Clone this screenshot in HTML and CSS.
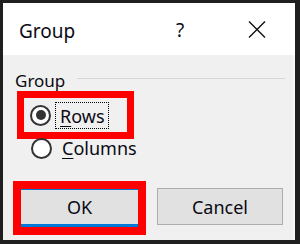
FILE: index.html
```html
<!DOCTYPE html>
<html>
<head>
<meta charset="utf-8">
<link rel="stylesheet" href="styles.css">
</head>
<body>
<div class="window">
  <div class="titlebar">
    <div class="title">Group</div>
    <div class="tb-btn help">?</div>
    <div class="tb-btn close">
      <svg width="18" height="17" viewBox="0 0 18 17"><path d="M1 0.5 L17 16.5 M17 0.5 L1 16.5" stroke="#111" stroke-width="1.4" fill="none"/></svg>
    </div>
  </div>
  <div class="content">
    <div class="group-head">
      <span class="group-label">Group</span>
      <span class="group-line"></span>
    </div>
    <div class="highlight rows-box">
      <label class="option">
        <span class="radio checked"></span>
        <span class="focus"><u>R</u>ows</span>
      </label>
    </div>
    <label class="option columns">
      <span class="radio"></span>
      <span class="opt-text"><u>C</u>olumns</span>
    </label>
    <div class="buttons">
      <div class="highlight ok-box">
        <button class="btn default">OK</button>
      </div>
      <button class="btn cancel">Cancel</button>
    </div>
  </div>
</div>
</body>
</html>
```
FILE: styles.css
```css
* { box-sizing: border-box; }
html, body { margin: 0; padding: 0; }
body {
  width: 300px;
  height: 244px;
  font-family: "Noto Sans", "Open Sans", sans-serif;
  color: #0a0a14;
  background: #222;
}
.window {
  width: 300px;
  height: 244px;
  border-style: solid;
  border-color: #1f1f1f;
  border-width: 3px 5px 4px 3px;
  display: flex;
  flex-direction: column;
  background: #f0f0f0;
}
.titlebar {
  height: 52px;
  background: #fff;
  display: flex;
  align-items: center;
}
.title {
  flex: 1;
  font-size: 19px;
  line-height: 24px;
  padding-left: 16px;
  padding-top: 3px;
}
.tb-btn {
  width: 76px;
  display: flex;
  align-items: center;
  justify-content: center;
}
.help {
  font-size: 19px;
  line-height: 24px;
  padding-top: 2px;
}
.close { width: 77px; height: 17px; }
.close svg { display: block; }
.content {
  flex: 1;
  padding-top: 16px;
  display: flex;
  flex-direction: column;
  border-right: 2px solid #f8f8f8;
}
.group-head {
  display: flex;
  height: 20px;
  padding-left: 12px;
  padding-right: 8px;
}
.group-label {
  font-size: 17px;
  line-height: 20px;
}
.group-line {
  flex: 1;
  margin-left: 12px;
  margin-top: 7px;
  height: 0;
  border-top: 1px solid #d5d5d5;
}
.highlight {
  border: 7px solid #f00;
}
.rows-box {
  margin-left: 14px;
  width: 117px;
  height: 48px;
  display: flex;
  align-items: center;
  padding-left: 6px;
}
.option {
  display: flex;
  align-items: center;
  font-size: 18px;
  line-height: 20px;
}
.radio {
  width: 21px;
  height: 21px;
  border-radius: 50%;
  border: 2px solid #333;
  background: #fff;
  position: relative;
  flex: none;
}
.radio.checked::after {
  content: "";
  position: absolute;
  left: 3.5px;
  top: 3.5px;
  width: 10px;
  height: 10px;
  border-radius: 50%;
  background: #333;
}
.focus {
  margin-left: 4px;
  border: 1px dotted #000;
  height: 27px;
  padding: 3px 3px 0 4px;
  line-height: 20px;
}
.opt-text { margin-left: 10px; }
u { text-underline-offset: 3px; text-decoration-thickness: 1px; }
.columns {
  padding-left: 28px;
  height: 20px;
  margin-top: -1px;
}
.buttons {
  margin-top: 23px;
  padding-left: 10px;
  display: flex;
  align-items: flex-start;
}
.ok-box {
  border-width: 8px;
  width: 133px;
  height: 54px;
}
.btn {
  font-family: inherit;
  font-size: 18px;
  color: #0a0a14;
  background: #e1e1e1;
  margin: 0;
  padding: 0;
}
.default {
  width: 100%;
  height: 38px;
  border: 0;
  border-top: 1px solid #0078d7;
  border-bottom: 3px solid #0078d7;
}
.cancel {
  margin-left: 11px;
  margin-top: 7px;
  width: 126px;
  height: 37px;
  border: 1px solid #adadad;
}
```
